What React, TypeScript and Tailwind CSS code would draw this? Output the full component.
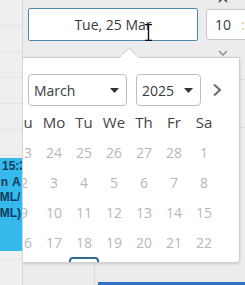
import React from "react";

const rows = [
  ["23", "24", "25", "26", "27", "28", "1"],
  ["2", "3", "4", "5", "6", "7", "8"],
  ["9", "10", "11", "12", "13", "14", "15"],
  ["16", "17", "18", "19", "20", "21", "22"],
  ["23", "24", "25", "26", "27", "28", "29"],
];
const days = ["Su", "Mo", "Tu", "We", "Th", "Fr", "Sa"];

export default function App() {
  return (
    <div
      className="relative w-[245px] h-[285px] overflow-hidden bg-[#ececec] text-[#333]"
      style={{ fontFamily: '"Open Sans", "Noto Sans", sans-serif' }}
    >
      <div className="flex h-full">
        {/* left column */}
        <div className="relative w-[23px] shrink-0 border-r border-[#d6d6d6] bg-[#efefef] flex flex-col">
          {Array.from({ length: 11 }).map((_, i) => (
            <div key={i} className="h-[26px] shrink-0 border-b border-[#e4e4e4]" />
          ))}
          <div
            className="absolute left-0 top-[158px] w-[22px] h-[93px] bg-[#36b9ec] overflow-hidden text-[12px] font-bold leading-[15.5px] text-[#0c3a5c] pt-[1px]"
            style={{ fontFamily: '"Liberation Sans", Arial, sans-serif' }}
          >
            <div className="whitespace-nowrap ml-[2px]">15:30</div>
            <div className="whitespace-nowrap -ml-[3px] tracking-[0.5px]">in A</div>
            <div className="whitespace-nowrap -ml-[9px]">HML/</div>
            <div className="whitespace-nowrap -ml-[9px]">HML)</div>
          </div>
        </div>

        {/* main area */}
        <div className="relative flex-1 flex flex-col overflow-hidden">
          <div className="flex items-start gap-[8px] pl-[5px] pt-[8px] h-[57px] shrink-0">
            <div className="relative shrink-0 w-[170px] h-[33px] bg-white border border-[#4f86ae] rounded-[2px] flex items-center justify-center text-[14px] text-[#3a3a3a]">
              Tue, 25 Mar
              <svg className="absolute left-[115px] top-[15px]" width="9" height="17" viewBox="0 0 9 17">
                <path d="M1 0.5h7M1 16.5h7M4.5 0.5v16" stroke="#111" strokeWidth="1.4" fill="none" />
              </svg>
            </div>
            <div className="relative shrink-0 mt-[1px] w-[60px] h-[31px] bg-white border border-[#c9c9c9] rounded-[3px] flex items-center pl-[8px] text-[14px] text-[#3a3a3a]">
              10
              <span className="absolute left-[34px] top-[4px] text-[#e9c766]">:</span>
              <svg className="absolute left-[11px] -top-[14px]" width="10" height="7" viewBox="0 0 10 7">
                <path d="M1 6l4-4 4 4" stroke="#444" strokeWidth="1.6" fill="none" />
              </svg>
              <svg className="absolute left-[11px] top-[40px]" width="10" height="6" viewBox="0 0 10 6">
                <path d="M1 1l4 4 4-4" stroke="#8a8a8a" strokeWidth="1.4" fill="none" />
              </svg>
            </div>
          </div>
          <div className="flex-1 relative">
            <div className="absolute left-[71px] top-[206px] w-[1px] h-[30px] bg-[#d9d9d9]" />
            <div className="absolute left-[75px] top-[225px] right-0 h-[4px] bg-[#2f73c6]" />
            <div className="absolute left-[217px] top-[22px] right-0 h-[1px] bg-[#dcdcdc]" />
            <div className="absolute left-[217px] top-[70px] right-0 h-[1px] bg-[#dcdcdc]" />
          </div>

          {/* popup */}
          <div className="absolute left-[-15px] top-[57px] w-[232px] h-[206px] bg-white border border-[#cfcfcf] rounded-b-[4px] shadow-[0_1px_3px_rgba(0,0,0,0.15)]">
            <div className="absolute left-[113px] -top-[8px] w-[14px] h-[14px] rotate-45 bg-white border-l border-t border-[#cfcfcf]" />
            <div className="relative flex items-center pt-[16px] pl-[19px] gap-[9px]">
              <div className="w-[99px] h-[32px] border border-[#bdbdbd] rounded-[4px] flex items-center justify-between pl-[5px] pr-[7px] text-[14px] text-[#3a3a3a]">
                March
                <svg width="9" height="5" viewBox="0 0 9 5"><path d="M0 0h9L4.5 5z" fill="#333" /></svg>
              </div>
              <div className="w-[65px] h-[32px] border border-[#bdbdbd] rounded-[4px] flex items-center justify-between pl-[5px] pr-[7px] text-[14px] text-[#3a3a3a]">
                2025
                <svg width="9" height="5" viewBox="0 0 9 5"><path d="M0 0h9L4.5 5z" fill="#333" /></svg>
              </div>
              <svg className="ml-[2px]" width="10" height="14" viewBox="0 0 10 14">
                <path d="M2 1.5l6 5.5-6 5.5" stroke="#6a6a6a" strokeWidth="2" fill="none" />
              </svg>
            </div>
            <div className="grid grid-cols-[repeat(7,30px)] mt-[1px]">
              {days.map((d) => (
                <div key={d} className="h-[30px] flex items-center justify-center text-[15px] text-[#444]">
                  {d}
                </div>
              ))}
            </div>
            <div className="overflow-hidden h-[125px]">
              {rows.map((r, i) => (
                <div key={i} className="grid grid-cols-[repeat(7,30px)]">
                  {r.map((n, j) => (
                    <div
                      key={j}
                      className={
                        i === 4 && j === 2
                          ? "h-[30px] flex items-center justify-center text-[14px] text-[#b7b7b7] border-2 border-[#2d6a95] rounded-[4px]"
                          : "h-[30px] flex items-center justify-center text-[14px] text-[#b7b7b7]"
                      }
                    >
                      {n}
                    </div>
                  ))}
                </div>
              ))}
            </div>
          </div>
        </div>
      </div>
    </div>
  );
}
